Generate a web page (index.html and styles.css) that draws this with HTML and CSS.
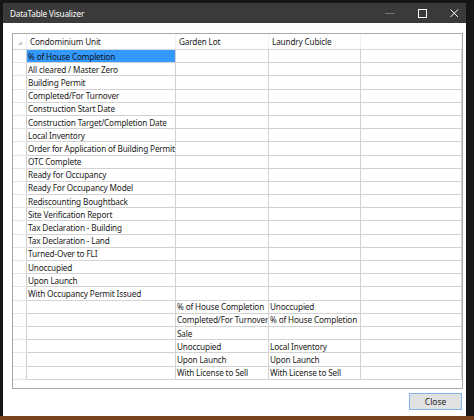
FILE: index.html
```html
<!DOCTYPE html>
<html lang="en">
<head>
    <meta charset="UTF-8">
    <title>DataTable Visualizer</title>
    <link rel="stylesheet" href="styles.css">
</head>
<body>
    <div class="window">
        <div class="titlebar">
            <span class="title">DataTable Visualizer</span>
            <div class="controls">
                <svg class="ctl disabled" width="10" height="10" viewBox="0 0 10 10"><line x1="0" y1="5.5" x2="10" y2="5.5" stroke="#fff" stroke-width="1"/></svg>
                <svg class="ctl" width="10" height="10" viewBox="0 0 10 10"><rect x="1.5" y="1.5" width="8" height="8" fill="none" stroke="#fff" stroke-width="1"/></svg>
                <svg class="ctl" width="10" height="10" viewBox="0 0 10 10"><path d="M1.5 1.5 L9 9 M9 1.5 L1.5 9" stroke="#fff" stroke-width="1"/></svg>
            </div>
        </div>
        <div class="content">
            <div class="grid">
                <table>
                    <thead>
                        <tr>
                            <th class="rowhead"><span class="sort"></span></th>
                            <th class="c1">Condominium Unit</th>
                            <th class="c2">Garden Lot</th>
                            <th class="c3">Laundry Cubicle</th>
                            <th class="c4"></th>
                        </tr>
                    </thead>
                    <tbody id="rows"></tbody>
                </table>
            </div>
            <div class="footer">
                <button class="close-btn">Close</button>
            </div>
        </div>
    </div>
    <div class="taskbar"></div>

    <script>
        // Zeilen der Tabelle: [Condominium Unit, Garden Lot, Laundry Cubicle]
        const data = [
            ['% of House Completion', '', ''],
            ['All cleared / Master Zero', '', ''],
            ['Building Permit', '', ''],
            ['Completed/For Turnover', '', ''],
            ['Construction Start Date', '', ''],
            ['Construction Target/Completion Date', '', ''],
            ['Local Inventory', '', ''],
            ['Order for Application of Building Permit', '', ''],
            ['OTC Complete', '', ''],
            ['Ready for Occupancy', '', ''],
            ['Ready For Occupancy Model', '', ''],
            ['Rediscounting Boughtback', '', ''],
            ['Site Verification Report', '', ''],
            ['Tax Declaration - Building', '', ''],
            ['Tax Declaration - Land', '', ''],
            ['Turned-Over to FLI', '', ''],
            ['Unoccupied', '', ''],
            ['Upon Launch', '', ''],
            ['With Occupancy Permit Issued', '', ''],
            ['', '% of House Completion', 'Unoccupied'],
            ['', 'Completed/For Turnover', '% of House Completion'],
            ['', 'Sale', ''],
            ['', 'Unoccupied', 'Local Inventory'],
            ['', 'Upon Launch', 'Upon Launch'],
            ['', 'With License to Sell', 'With License to Sell']
        ];

        const tbody = document.getElementById('rows');
        data.forEach((row, i) => {
            const tr = document.createElement('tr');
            const head = document.createElement('td');
            head.className = 'rowhead';
            tr.appendChild(head);
            row.forEach((text, j) => {
                const td = document.createElement('td');
                td.textContent = text;
                if (i === 0 && j === 0) td.className = 'selected';
                tr.appendChild(td);
            });
            tr.appendChild(document.createElement('td'));
            tbody.appendChild(tr);
        });
    </script>
</body>
</html>
```

FILE: styles.css
```css
body {
    margin: 0;
    padding: 0;
    width: 474px;
    height: 420px;
    overflow: hidden;
    background-color: #161616;
    font-family: "Noto Sans", "Open Sans", sans-serif;
    font-size: 8.2px;
    letter-spacing: -0.15px;
    color: #1a1a1a;
}

.window {
    margin: 3px 0 0 3px;
    width: 463px;
    height: 413px;
    background-color: white;
    display: flex;
    flex-direction: column;
}

.titlebar {
    height: 20px;
    background-color: #3a3a3a;
    color: white;
    display: flex;
    align-items: center;
    justify-content: space-between;
    padding-left: 7px;
}

.title {
    font-size: 8.2px;
}

.controls {
    display: flex;
    align-items: center;
    gap: 22px;
    padding-right: 7px;
}

.ctl.disabled {
    opacity: 0.3;
}

.content {
    flex: 1;
    padding: 10px 3px 0 9px;
    display: flex;
    flex-direction: column;
}

.grid {
    height: 354px;
    border: 1px solid #a9a9a9;
    background-color: white;
    overflow: hidden;
}

table {
    border-collapse: collapse;
    table-layout: fixed;
    width: 100%;
}

th {
    height: 15px;
    font-weight: normal;
    text-align: left;
    padding: 0 0 0 3px;
    border-bottom: 1px solid #d6d6d6;
    border-right: 1px solid #f0f0f0;
    white-space: nowrap;
    overflow: hidden;
}

td {
    height: 12.2px;
    padding: 0 0 0 1px;
    border: 1px solid #d2d2d2;
    white-space: nowrap;
    overflow: hidden;
    line-height: 11px;
}

th.rowhead, td.rowhead {
    width: 13px;
    padding: 0;
}

td.rowhead {
    border-left: none;
    border-color: #e6e6e6;
    border-right-color: #cfcfcf;
}

th.c1 { width: 145px; }
th.c2 { width: 89px; }
th.c3 { width: 88px; }

.sort {
    display: inline-block;
    margin-left: 5px;
    width: 0;
    height: 0;
    border-left: 4px solid transparent;
    border-bottom: 4px solid #c4c4c4;
}

td.selected {
    background-color: #3399ff;
    color: #101010;
}

.footer {
    display: flex;
    justify-content: flex-end;
    padding-top: 4px;
    padding-right: 1px;
}

.close-btn {
    width: 53px;
    height: 17px;
    background-color: #e1e1e1;
    border: 1px solid #7eb4ea;
    font-family: inherit;
    font-size: 8.4px;
    color: #1a1a1a;
    padding: 0;
}

.taskbar {
    height: 4px;
    background-color: #7a4320;
}
```
